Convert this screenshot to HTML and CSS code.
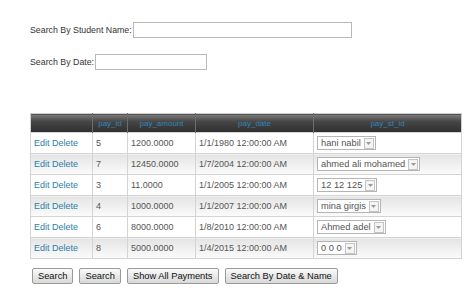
FILE: index.html
```html
<!DOCTYPE html>
<html lang="en">
<head>
<meta charset="UTF-8">
<title>Payments</title>
<link rel="stylesheet" href="styles.css">
</head>
<body>
<div class="page">
    <div class="field">
        <label for="student-name">Search By Student Name:</label>
        <input type="text" id="student-name" class="name-input">
    </div>
    <div class="field">
        <label for="pay-date">Search By Date:</label>
        <input type="text" id="pay-date" class="date-input">
    </div>

    <table class="grid">
        <colgroup>
            <col style="width:62px">
            <col style="width:35px">
            <col style="width:68px">
            <col style="width:118px">
            <col>
        </colgroup>
        <thead>
            <tr>
                <th></th>
                <th><a href="#">pay_id</a></th>
                <th><a href="#">pay_amount</a></th>
                <th><a href="#">pay_date</a></th>
                <th><a href="#">pay_st_id</a></th>
            </tr>
        </thead>
        <tbody>
            <tr>
                <td><a href="#">Edit</a> <a href="#">Delete</a></td>
                <td>5</td>
                <td>1200.0000</td>
                <td>1/1/1980 12:00:00 AM</td>
                <td><span class="dd"><span class="dd-text">hani nabil</span><span class="dd-btn"><svg width="5" height="3" viewBox="0 0 5 3"><path d="M0 0h5L2.5 3z" fill="#999"/></svg></span></span></td>
            </tr>
            <tr class="alt">
                <td><a href="#">Edit</a> <a href="#">Delete</a></td>
                <td>7</td>
                <td>12450.0000</td>
                <td>1/7/2004 12:00:00 AM</td>
                <td><span class="dd"><span class="dd-text">ahmed ali mohamed</span><span class="dd-btn"><svg width="5" height="3" viewBox="0 0 5 3"><path d="M0 0h5L2.5 3z" fill="#999"/></svg></span></span></td>
            </tr>
            <tr>
                <td><a href="#">Edit</a> <a href="#">Delete</a></td>
                <td>3</td>
                <td>11.0000</td>
                <td>1/1/2005 12:00:00 AM</td>
                <td><span class="dd"><span class="dd-text">12 12 125</span><span class="dd-btn"><svg width="5" height="3" viewBox="0 0 5 3"><path d="M0 0h5L2.5 3z" fill="#999"/></svg></span></span></td>
            </tr>
            <tr class="alt">
                <td><a href="#">Edit</a> <a href="#">Delete</a></td>
                <td>4</td>
                <td>1000.0000</td>
                <td>1/1/2007 12:00:00 AM</td>
                <td><span class="dd"><span class="dd-text">mina girgis</span><span class="dd-btn"><svg width="5" height="3" viewBox="0 0 5 3"><path d="M0 0h5L2.5 3z" fill="#999"/></svg></span></span></td>
            </tr>
            <tr>
                <td><a href="#">Edit</a> <a href="#">Delete</a></td>
                <td>6</td>
                <td>8000.0000</td>
                <td>1/8/2010 12:00:00 AM</td>
                <td><span class="dd"><span class="dd-text">Ahmed adel</span><span class="dd-btn"><svg width="5" height="3" viewBox="0 0 5 3"><path d="M0 0h5L2.5 3z" fill="#999"/></svg></span></span></td>
            </tr>
            <tr class="alt">
                <td><a href="#">Edit</a> <a href="#">Delete</a></td>
                <td>8</td>
                <td>5000.0000</td>
                <td>1/4/2015 12:00:00 AM</td>
                <td><span class="dd"><span class="dd-text">0 0 0</span><span class="dd-btn"><svg width="5" height="3" viewBox="0 0 5 3"><path d="M0 0h5L2.5 3z" fill="#999"/></svg></span></span></td>
            </tr>
        </tbody>
    </table>

    <div class="actions">
        <button type="button">Search</button>
        <button type="button">Search</button>
        <button type="button">Show All Payments</button>
        <button type="button">Search By Date &amp; Name</button>
    </div>
</div>
</body>
</html>
```

FILE: styles.css
```css
body {
    margin: 0;
    background: #fff;
    font-family: "Liberation Sans", Arial, sans-serif;
    font-size: 9px;
    color: #333;
}
.page {
    padding: 22px 0 0 30px;
}
.field {
    display: flex;
    align-items: center;
    gap: 1px;
    height: 16px;
}
.field label { font-size: 8.8px; }
.field + .field { margin-top: 16px; }
.field input {
    box-sizing: border-box;
    height: 16px;
    border: 1px solid #b9b9b9;
    padding: 0 2px;
    margin: 0;
    font: inherit;
    outline: none;
}
.name-input { width: 219px; }
.date-input { width: 112px; }

.grid {
    margin-top: 43px;
    width: 432px;
    border-collapse: collapse;
    table-layout: fixed;
    border: 1px solid #cfcfcf;
}
.grid th {
    height: 18px;
    padding: 0;
    background: linear-gradient(180deg, #7d7d7d 0%, #454545 40%, #2f2f2f 100%);
    border-left: 1px solid #6d6d6d;
    font-weight: normal;
    font-size: 8px;
    text-align: center;
}
.grid th:first-child { border-left: none; }
.grid th a { color: #2f86b8; text-decoration: none; }
.grid td {
    height: 20px;
    padding: 0 3px;
    border: 1px solid #d4d4d4;
    color: #555;
    white-space: nowrap;
    background: #fff;
}
.grid tr.alt td { background: linear-gradient(180deg, #e4e4e4 0%, #fbfbfb 100%); }
.grid td a { color: #2b7fa9; text-decoration: none; }

.dd {
    display: inline-flex;
    align-items: center;
    height: 14px;
    box-sizing: border-box;
    border: 1px solid #b5b5b5;
    background: #fff;
    padding: 0 1px 0 3px;
    gap: 3px;
    vertical-align: middle;
    color: #555;
    font-size: 9.3px;
}
.dd-btn {
    display: inline-flex;
    align-items: center;
    justify-content: center;
    width: 8px;
    height: 9px;
    border: 1px solid #c4c4c4;
    background: #f4f4f4;
}

.actions {
    display: flex;
    gap: 6px;
    margin: 9px 0 0 2px;
}
.actions button {
    height: 16px;
    padding: 0 5px;
    margin: 0;
    font: inherit;
    font-size: 9.3px;
    color: #111;
    border: 1px solid #9a9a9a;
    border-radius: 2px;
    background: linear-gradient(180deg, #fbfbfb 0%, #e8e8e8 50%, #d9d9d9 100%);
    cursor: pointer;
}
```
